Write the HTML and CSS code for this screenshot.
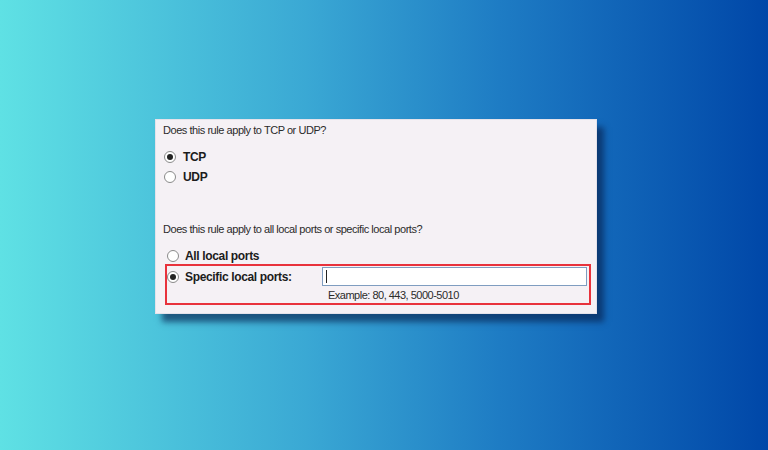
FILE: index.html
```html
<!doctype html>
<html lang="en">
  <head>
    <meta charset="UTF-8" />
    <meta name="viewport" content="width=device-width, initial-scale=1.0" />
    <title>New Inbound Rule - Protocol and Ports</title>
    <link rel="stylesheet" href="styles.css">
  </head>
  <body>
    <div class="dialog">
      <p class="question">Does this rule apply to TCP or UDP?</p>
      <div class="options">
        <label class="option"><span class="radio checked"></span>TCP</label>
        <label class="option"><span class="radio"></span>UDP</label>
      </div>

      <p class="question second">Does this rule apply to all local ports or specific local ports?</p>
      <div class="options ports">
        <label class="option"><span class="radio"></span>All local ports</label>
        <div class="highlight">
          <div class="specific">
            <label class="option"><span class="radio checked"></span>Specific local ports:</label>
            <div class="port-field">
              <div class="port-input"><span class="caret"></span></div>
              <p class="hint">Example: 80, 443, 5000-5010</p>
            </div>
          </div>
        </div>
      </div>
    </div>
  </body>
</html>
```

FILE: styles.css
```css
* {
  margin: 0;
  padding: 0;
  box-sizing: border-box;
}

body {
  width: 768px;
  height: 450px;
  overflow: hidden;
  background: linear-gradient(90deg, #5fe1e4 0%, #3aa8d4 40%, #1e7cc4 65%, #0047a8 100%);
  font-family: "Liberation Sans", Arial, sans-serif;
  color: #2b2b2b;
  padding: 119px 0 0 155px;
}

.dialog {
  width: 442px;
  height: 195px;
  background: #f5f1f5;
  border: 1px solid #e4e2ea;
  box-shadow: 7px 8px 6px rgba(8, 34, 80, 0.65);
  padding: 3px 4px 0 7px;
}

.question {
  font-size: 11px;
  letter-spacing: -0.45px;
  line-height: 14px;
}

.options {
  display: flex;
  flex-direction: column;
  gap: 6px;
  margin-top: 13px;
  padding-left: 1px;
}

.option {
  display: flex;
  align-items: center;
  gap: 7px;
  font-size: 12px;
  font-weight: bold;
  letter-spacing: -0.35px;
  line-height: 14px;
  color: #1c1c1c;
}

.radio {
  width: 12px;
  height: 12px;
  border: 1px solid #8a8a8a;
  border-radius: 50%;
  background: #fff;
  display: flex;
  align-items: center;
  justify-content: center;
}

.radio.checked::after {
  content: "";
  width: 6px;
  height: 6px;
  border-radius: 50%;
  background: #222;
}

.question.second {
  margin-top: 38px;
}

.ports {
  margin-top: 13px;
  padding-left: 4px;
  gap: 1px;
}

.ports .option {
  gap: 6px;
}

.highlight {
  margin-left: -2px;
  margin-right: 1px;
  border: 2px solid #e8323c;
  padding: 1px 2px 1px 0;
}

.specific {
  display: flex;
  align-items: flex-start;
}

.specific .option {
  width: 155px;
  padding-top: 3px;
}

.port-field {
  flex: 1;
}

.port-input {
  height: 19px;
  background: #fff;
  border: 1px solid #7f9dc0;
  padding: 2px 3px;
}

.caret {
  display: block;
  width: 1px;
  height: 13px;
  background: #222;
}

.hint {
  font-size: 11px;
  letter-spacing: -0.5px;
  line-height: 14px;
  margin: 2px 0 0 6px;
}
```
